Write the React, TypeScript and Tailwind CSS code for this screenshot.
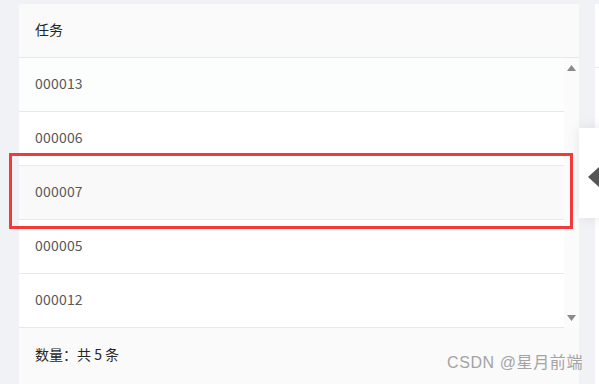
import React from "react";

const rows = [
  { id: "000013", bg: "bg-[#fcfefd]" },
  { id: "000006", bg: "bg-white" },
  { id: "000007", bg: "bg-[#f9f9f9]" },
  { id: "000005", bg: "bg-white" },
  { id: "000012", bg: "bg-white" },
];

export default function App() {
  return (
    <div
      className="relative w-[599px] h-[384px] overflow-hidden bg-[#f0f2f5] flex pt-[4px] pl-[19px]"
      style={{ fontFamily: '"Noto Sans CJK SC", "Microsoft YaHei", sans-serif' }}
    >
      {/* card */}
      <div className="w-[560px] flex flex-col bg-white shrink-0">
        <div className="h-[54px] shrink-0 bg-[#fafafa] border-b border-[#e8e8e8] flex items-center pl-[16px] pb-[2px] text-[14px] text-[#262626]">
          任务
        </div>
        <div className="flex h-[270px] shrink-0">
          <div className="w-[545px] flex flex-col">
            {rows.map((r) => (
              <div
                key={r.id}
                className={`h-[54px] shrink-0 border-b border-[#e8e8e8] flex items-center pl-[16px] pb-[3px] text-[14px] tracking-[0.2px] text-[#595959] ${r.bg}`}
              >
                {r.id}
              </div>
            ))}
          </div>
          <div className="w-[15px] bg-[#fbfbfb] flex flex-col items-center justify-between py-[7px]">
            <svg width="9" height="6" viewBox="0 0 9 6">
              <path d="M0 6 L4.5 0 L9 6 Z" fill="#8a8a8a" />
            </svg>
            <svg width="9" height="6" viewBox="0 0 9 6">
              <path d="M0 0 L4.5 6 L9 0 Z" fill="#8a8a8a" />
            </svg>
          </div>
        </div>
        <div className="flex-1 bg-[#fafafa] flex items-center pl-[16px] pb-[4px] text-[14px] text-[#262626]">
          数量：共&nbsp;5&nbsp;条
        </div>
      </div>

      {/* right side */}
      <div className="flex-1 flex justify-end">
        <div className="w-[4px] bg-white flex flex-col">
          <div className="h-[64px] border-b border-[#e8e8e8]" />
        </div>
      </div>

      {/* popup */}
      <div className="absolute left-[579px] top-[128px] w-[30px] h-[90px] bg-white shadow-[0_0_14px_rgba(0,0,0,0.09)]" />
      <svg className="absolute left-[588px] top-[167px]" width="11" height="20" viewBox="0 0 11 20">
        <path d="M0 10 L11 0 L11 20 Z" fill="#555555" />
      </svg>

      {/* red highlight */}
      <div className="absolute left-[9px] top-[153px] w-[564px] h-[76px] border-[3px] border-[#f4393b]" />

      {/* watermark */}
      <div
        className="absolute left-[447px] top-[352px] text-[16px] leading-[22px] tracking-[0.6px] text-[#a3a3a3] whitespace-nowrap"
        style={{ fontFamily: '"Liberation Sans", "Noto Sans CJK SC", sans-serif' }}
      >
        CSDN @星月前端
      </div>
    </div>
  );
}
